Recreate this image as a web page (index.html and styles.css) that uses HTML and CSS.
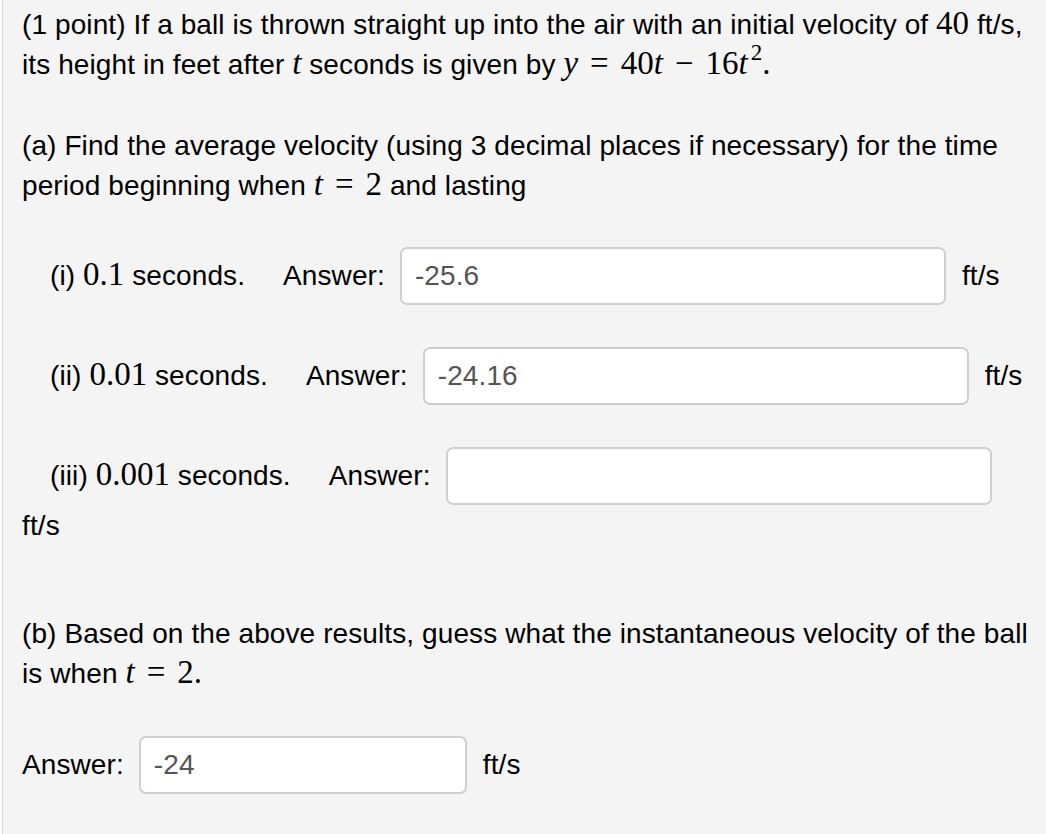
FILE: index.html
```html
<!DOCTYPE html>
<html>
<head>
<meta charset="utf-8">
<link rel="stylesheet" href="styles.css">
</head>
<body>
<div class="problem">
  <p class="para intro">(1 point) If a ball is thrown straight up into the air with an initial velocity of <span class="m">40</span> ft/s,<br>its height in feet after <span class="m"><i>t</i></span> seconds is given by <span class="m"><i>y</i><span class="op">=</span>40<i>t</i><span class="op">&minus;</span>16<i>t</i><sup>2</sup>.</span></p>

  <p class="para part-a">(a) Find the average velocity (using 3 decimal places if necessary) for the time<br>period beginning when <span class="m"><i>t</i><span class="op">=</span>2</span> and lasting</p>

  <div class="row row-i">
    <span class="label">(i) <span class="m">0.1</span> seconds.</span>
    <span class="ans">Answer:</span>
    <span class="field wide">-25.6</span>
    <span class="unit">ft/s</span>
  </div>

  <div class="row row-ii">
    <span class="label">(ii) <span class="m">0.01</span> seconds.</span>
    <span class="ans">Answer:</span>
    <span class="field wide">-24.16</span>
    <span class="unit">ft/s</span>
  </div>

  <div class="row row-iii">
    <span class="label">(iii) <span class="m">0.001</span> seconds.</span>
    <span class="ans">Answer:</span>
    <span class="field wide"></span>
  </div>
  <div class="wrapped-unit">ft/s</div>

  <p class="para part-b">(b) Based on the above results, guess what the instantaneous velocity of the ball<br>is when <span class="m"><i>t</i><span class="op">=</span>2.</span></p>

  <div class="row row-b">
    <span class="ans">Answer:</span>
    <span class="field short">-24</span>
    <span class="unit">ft/s</span>
  </div>
</div>
</body>
</html>
```

FILE: styles.css
```css
html, body {
  margin: 0;
  padding: 0;
}

body {
  background: #fafafa;
  width: 1046px;
  height: 834px;
  overflow: hidden;
}

.problem {
  margin-left: 2px;
  border-left: 1px solid #dcdcdc;
  background: #f4f4f4;
  height: 834px;
  box-sizing: border-box;
  padding: 5px 10px 0 19px;
  font-family: "Liberation Sans", Arial, Helvetica, sans-serif;
  font-size: 28px;
  line-height: 40px;
  letter-spacing: 0.1px;
  color: #000;
}

.para {
  margin: 0;
  white-space: nowrap;
}

.m {
  font-family: "Liberation Serif", "Times New Roman", serif;
  font-size: 33px;
  line-height: 0;
  letter-spacing: 0;
}

.m i {
  font-style: italic;
}

.op {
  padding: 0 12px;
}

.m sup {
  font-size: 23px;
  line-height: 0;
  vertical-align: 14px;
  margin-left: 3px;
}

.part-a {
  margin-top: 41px;
}

.row {
  display: flex;
  align-items: center;
  height: 58px;
  white-space: nowrap;
}

.row-i {
  margin-top: 41px;
  padding-left: 28px;
}

.row-ii {
  margin-top: 42px;
  padding-left: 28px;
}

.row-iii {
  margin-top: 42px;
  padding-left: 28px;
}

.label {
  margin-right: 38px;
}

.ans {
  margin-right: 15px;
}

.field {
  box-sizing: border-box;
  height: 58px;
  flex: none;
  background: #fff;
  border: 2px solid #cfcfcf;
  border-radius: 7px;
  padding: 0 13px;
  color: #555;
  display: flex;
  align-items: center;
}

.field.wide {
  width: 546px;
}

.field.short {
  width: 328px;
}

.unit {
  margin-left: 16px;
}

.wrapped-unit {
  margin-top: 1px;
  height: 40px;
}

.part-b {
  margin-top: 68px;
}

.row-b {
  margin-top: 42px;
}
```
